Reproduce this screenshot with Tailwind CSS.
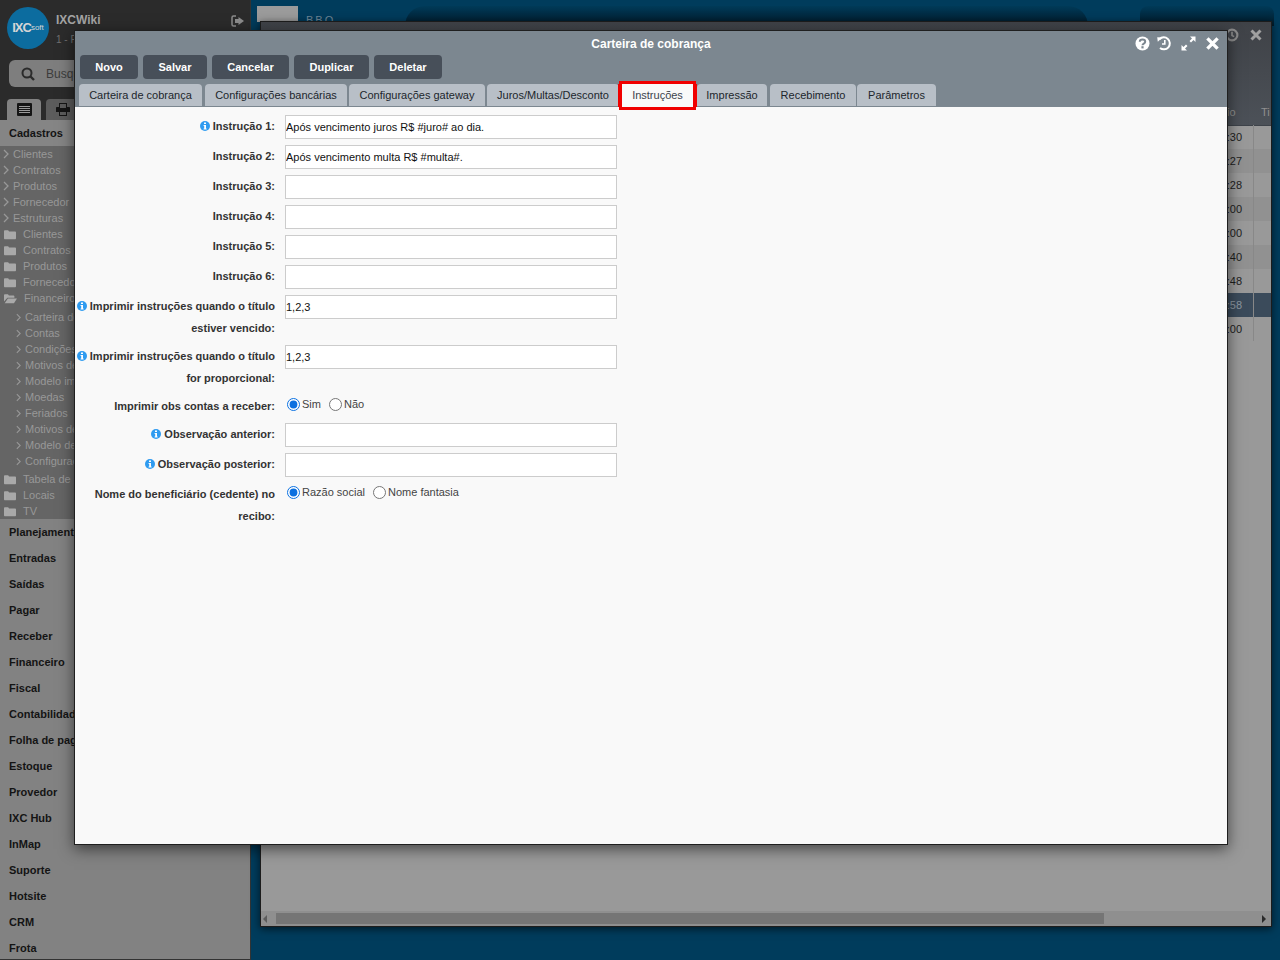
<!DOCTYPE html>
<html lang="pt-BR">
<head>
    <meta charset="UTF-8">
    <title>IXCWiki - Carteira de cobrança</title>
    <script src="https://cdn.jsdelivr.net/npm/@tailwindcss/browser@4"></script>
</head>
<body class="relative w-[1280px] h-[960px] overflow-hidden bg-[#003c5c] font-['Liberation_Sans',Arial,sans-serif] text-[11px]">
    <svg class="hidden">
        <symbol id="folder" viewBox="0 0 14 12"><path fill="#a9a9a9" d="M1.2 1h3.6l1.2 1.5h6.8c.6 0 1.2.5 1.2 1.2v6.6c0 .7-.6 1.2-1.2 1.2H1.2C.6 11.500 0 11 0 10.300V2.200C0 1.500.6 1 1.200 1z"/></symbol>
        <symbol id="folder-open" viewBox="0 0 15 12"><path fill="#a9a9a9" d="M0 2.200C0 1.500.6 1 1.200 1h3.300l1.200 1.500h5.100c.6 0 1.200.5 1.200 1.200V5H4L0 9.500zM4.500 6H15l-3.500 5.500H.8z"/></symbol>
        <symbol id="chev" viewBox="0 0 6 10"><path fill="none" stroke="currentColor" stroke-width="1.300" d="M1 1l4 4-4 4"/></symbol>
        <symbol id="info" viewBox="0 0 10 10"><circle cx="5" cy="5" r="5" fill="#2f9bf0"/><path fill="#fff" d="M4 1.500h2v1.500H4zM3.600 4h2.400v3.600h.6v1H3.600v-1h.6V5h-.6z"/></symbol>
    </svg>

    <!-- Sidebar (behind the overlay) -->
    <aside class="absolute left-0 top-0 w-[251px] h-[960px] flex flex-col overflow-hidden bg-[#828282] border-r border-b border-[#333]">
        <div class="h-[120px] shrink-0 bg-[#2b2b2b] relative">
            <div class="absolute left-[7px] top-[7px] w-[42px] h-[42px] rounded-full bg-[#0c6c9f] flex items-center justify-center text-[#d5d5d5] font-bold text-[13px] tracking-[-1px]">IXC<span class="font-normal text-[8px] tracking-normal">soft</span></div>
            <div class="absolute left-[56px] top-[11px] text-[12px] font-bold text-[#a3a3a3]">IXCWiki</div>
            <div class="absolute left-[56px] top-[32px] text-[10px] text-[#6f6f6f]">1 - Filial</div>
            <svg class="absolute left-[231px] top-[15px] w-[13px] h-[12px] text-[#8c8c8c]" viewBox="0 0 13 12"><path fill="none" stroke="currentColor" stroke-width="1.500" d="M5 1H2.500C1.500 1 1 1.500 1 2.500v7c0 1 .5 1.500 1.500 1.500H5"/><path fill="currentColor" d="M7.500 2l5.500 4-5.500 4V8H4V4h3.500z"/></svg>
            <div class="absolute left-[9px] top-[60px] w-[220px] h-[27px] rounded-md bg-[#7e7e7e] flex items-center pl-[12px] gap-[11px] text-[12px] text-[#3c3c3c]">
                <svg class="w-[14px] h-[14px] text-[#2b2b2b]" viewBox="0 0 14 14"><circle cx="6" cy="6" r="4.500" fill="none" stroke="currentColor" stroke-width="2"/><path stroke="currentColor" stroke-width="2.400" d="M9.500 9.500L13 13"/></svg>
                Busque
            </div>
            <div class="absolute left-[7px] top-[99px] w-[34px] h-[21px] rounded-t bg-[#828282] flex items-center justify-center">
                <svg class="w-[15px] h-[13px]" viewBox="0 0 15 13"><rect width="15" height="13" rx="1" fill="#151515"/><path stroke="#9a9a9a" d="M2 3.500h11M2 5.500h11M2 7.500h11M2 9.500h11"/></svg>
            </div>
            <div class="absolute left-[46px] top-[99px] w-[34px] h-[21px] rounded-t bg-[#5c5c5c] flex items-center justify-center">
                <svg class="w-[14px] h-[13px]" viewBox="0 0 14 13"><path fill="#151515" d="M3 0h8v4h2c.6 0 1 .4 1 1v4h-3v4H3V9H0V5c0-.6.4-1 1-1h2zm1 1v4h6V1zm0 8v3h6V9z"/></svg>
            </div>
        </div>
        <div class="h-[26px] shrink-0 pl-[9px] flex items-center font-bold text-[#141414] bg-[#858585]">Cadastros</div>

        <div class="shrink-0 h-[373px] bg-[#656565] text-[#989898] whitespace-nowrap">
            <div class="h-[16px] flex items-center pl-[3px] gap-[4px]"><svg class="w-[6px] h-[10px]"><use href="#chev"/></svg>Clientes</div>
            <div class="h-[16px] flex items-center pl-[3px] gap-[4px]"><svg class="w-[6px] h-[10px]"><use href="#chev"/></svg>Contratos</div>
            <div class="h-[16px] flex items-center pl-[3px] gap-[4px]"><svg class="w-[6px] h-[10px]"><use href="#chev"/></svg>Produtos</div>
            <div class="h-[16px] flex items-center pl-[3px] gap-[4px]"><svg class="w-[6px] h-[10px]"><use href="#chev"/></svg>Fornecedor</div>
            <div class="h-[16px] flex items-center pl-[3px] gap-[4px]"><svg class="w-[6px] h-[10px]"><use href="#chev"/></svg>Estruturas</div>
            <div class="h-[16px] flex items-center pl-[4px] gap-[7px]"><svg class="w-[12px] h-[11px]"><use href="#folder"/></svg>Clientes</div>
            <div class="h-[16px] flex items-center pl-[4px] gap-[7px]"><svg class="w-[12px] h-[11px]"><use href="#folder"/></svg>Contratos</div>
            <div class="h-[16px] flex items-center pl-[4px] gap-[7px]"><svg class="w-[12px] h-[11px]"><use href="#folder"/></svg>Produtos</div>
            <div class="h-[16px] flex items-center pl-[4px] gap-[7px]"><svg class="w-[12px] h-[11px]"><use href="#folder"/></svg>Fornecedores</div>
            <div class="h-[19px] pb-[3px] flex items-center pl-[4px] gap-[7px]"><svg class="w-[13px] h-[11px]"><use href="#folder-open"/></svg>Financeiro</div>
            <div class="h-[16px] flex items-center pl-[16px] gap-[4px]"><svg class="w-[5px] h-[9px]"><use href="#chev"/></svg>Carteira de cobrança</div>
            <div class="h-[16px] flex items-center pl-[16px] gap-[4px]"><svg class="w-[5px] h-[9px]"><use href="#chev"/></svg>Contas</div>
            <div class="h-[16px] flex items-center pl-[16px] gap-[4px]"><svg class="w-[5px] h-[9px]"><use href="#chev"/></svg>Condições de pagamento</div>
            <div class="h-[16px] flex items-center pl-[16px] gap-[4px]"><svg class="w-[5px] h-[9px]"><use href="#chev"/></svg>Motivos de desconto</div>
            <div class="h-[16px] flex items-center pl-[16px] gap-[4px]"><svg class="w-[5px] h-[9px]"><use href="#chev"/></svg>Modelo impressão</div>
            <div class="h-[16px] flex items-center pl-[16px] gap-[4px]"><svg class="w-[5px] h-[9px]"><use href="#chev"/></svg>Moedas</div>
            <div class="h-[16px] flex items-center pl-[16px] gap-[4px]"><svg class="w-[5px] h-[9px]"><use href="#chev"/></svg>Feriados</div>
            <div class="h-[16px] flex items-center pl-[16px] gap-[4px]"><svg class="w-[5px] h-[9px]"><use href="#chev"/></svg>Motivos de cancelamento</div>
            <div class="h-[16px] flex items-center pl-[16px] gap-[4px]"><svg class="w-[5px] h-[9px]"><use href="#chev"/></svg>Modelo de contrato</div>
            <div class="h-[18px] pb-[2px] flex items-center pl-[16px] gap-[4px]"><svg class="w-[5px] h-[9px]"><use href="#chev"/></svg>Configurações</div>
            <div class="h-[16px] flex items-center pl-[4px] gap-[7px]"><svg class="w-[12px] h-[11px]"><use href="#folder"/></svg>Tabela de preços</div>
            <div class="h-[16px] flex items-center pl-[4px] gap-[7px]"><svg class="w-[12px] h-[11px]"><use href="#folder"/></svg>Locais</div>
            <div class="h-[16px] flex items-center pl-[4px] gap-[7px]"><svg class="w-[12px] h-[11px]"><use href="#folder"/></svg>TV</div>
        </div>

        <nav class="flex flex-col font-bold text-[#141414]">
            <div class="h-[26px] pl-[9px] flex items-center">Planejamento</div>
            <div class="h-[26px] pl-[9px] flex items-center">Entradas</div>
            <div class="h-[26px] pl-[9px] flex items-center">Saídas</div>
            <div class="h-[26px] pl-[9px] flex items-center">Pagar</div>
            <div class="h-[26px] pl-[9px] flex items-center">Receber</div>
            <div class="h-[26px] pl-[9px] flex items-center">Financeiro</div>
            <div class="h-[26px] pl-[9px] flex items-center">Fiscal</div>
            <div class="h-[26px] pl-[9px] flex items-center">Contabilidade</div>
            <div class="h-[26px] pl-[9px] flex items-center">Folha de pagamento</div>
            <div class="h-[26px] pl-[9px] flex items-center">Estoque</div>
            <div class="h-[26px] pl-[9px] flex items-center">Provedor</div>
            <div class="h-[26px] pl-[9px] flex items-center">IXC Hub</div>
            <div class="h-[26px] pl-[9px] flex items-center">InMap</div>
            <div class="h-[26px] pl-[9px] flex items-center">Suporte</div>
            <div class="h-[26px] pl-[9px] flex items-center">Hotsite</div>
            <div class="h-[26px] pl-[9px] flex items-center">CRM</div>
            <div class="h-[26px] pl-[9px] flex items-center">Frota</div>
        </nav>
    </aside>

    <!-- Top bar shapes of the desktop -->
    <div class="absolute left-[257px] top-[6px] w-[41px] h-[16px] bg-[#9b9b9b]"></div>
    <div class="absolute left-[306px] top-[12px] text-[11px] tracking-[2px] text-[#6f8797]">BBQ —</div>
    <div class="absolute left-[405px] top-[6px] w-[683px] h-[20px] rounded-t-[20px] bg-linear-to-b from-[#003a58] to-[#001b2b]"></div>
    <div class="absolute left-[1140px] top-[6px] w-[134px] h-[20px] rounded-t-lg bg-linear-to-b from-[#003a58] to-[#001b2b]"></div>

    <!-- Window behind the dialog -->
    <section class="absolute left-[260px] top-[21px] w-[1012px] h-[906px] bg-[#999] border border-[#1c1c1c] shadow-[0_2px_8px_rgba(0,0,0,0.6)] flex flex-col">
        <header class="h-[103px] shrink-0 bg-linear-to-b from-[#3f4247] to-[#4c5158] relative text-[#8a8a8a]">
            <svg class="absolute left-[964px] top-[6px] w-[14px] h-[14px] text-[#8a8a8a]" viewBox="0 0 13 13"><circle cx="6.500" cy="6.500" r="5" fill="none" stroke="currentColor" stroke-width="2"/><path fill="none" stroke="currentColor" stroke-width="1.500" d="M6.500 3.500v3.500l2 1"/></svg>
            <svg class="absolute left-[989px] top-[7px] w-[12px] h-[12px] text-[#a0a0a0]" viewBox="0 0 12 12"><path stroke="currentColor" stroke-width="3" d="M1.500 1.500l9 9M10.500 1.500l-9 9"/></svg>
            <div class="absolute left-[966px] top-[82px] text-[#8f8f8f]">io</div>
            <div class="absolute left-[1000px] top-[82px] text-[#8f8f8f]">Ti</div>
        </header>
        <div class="flex-1 relative text-[#1d1d1d]">
            <div class="h-[24px] flex items-center justify-end pr-[29px] bg-[#999] border-t border-[#3e434a]">:30</div>
            <div class="h-[24px] flex items-center justify-end pr-[29px] bg-[#919191]">:27</div>
            <div class="h-[24px] flex items-center justify-end pr-[29px] bg-[#999]">:28</div>
            <div class="h-[24px] flex items-center justify-end pr-[29px] bg-[#919191]">:00</div>
            <div class="h-[24px] flex items-center justify-end pr-[29px] bg-[#999]">:00</div>
            <div class="h-[24px] flex items-center justify-end pr-[29px] bg-[#919191]">:40</div>
            <div class="h-[24px] flex items-center justify-end pr-[29px] bg-[#999]">:48</div>
            <div class="h-[24px] flex items-center justify-end pr-[29px] bg-[#3b4b5b] text-[#8d97a1]">:58</div>
            <div class="h-[24px] flex items-center justify-end pr-[29px] bg-[#999]">:00</div>
            <div class="absolute left-[992px] top-0 h-[216px] w-px bg-[#888]"></div>
            <!-- horizontal scrollbar -->
            <div class="absolute left-0 right-0 bottom-0 h-[15px] bg-[#8f8f8f] flex items-center">
                <span class="ml-[2px] w-0 h-0 border-y-[4px] border-y-transparent border-r-[4px] border-r-[#5c5c5c]"></span>
                <div class="ml-[9px] w-[828px] h-[11px] bg-[#757575]"></div>
                <span class="ml-auto mr-[5px] w-0 h-0 border-y-[4px] border-y-transparent border-l-[4px] border-l-[#2a2a2a]"></span>
            </div>
        </div>
    </section>

    <!-- Dialog: Carteira de cobrança -->
    <section class="absolute left-[74px] top-[30px] w-[1154px] h-[815px] border border-[#1f1f1f] bg-[#f9f9f9] shadow-[0_4px_14px_rgba(0,0,0,0.55)] flex flex-col">
        <header class="h-[76px] shrink-0 bg-[#7c8790] relative">
            <h1 class="h-[25px] flex items-center justify-center text-[12px] font-bold text-white">Carteira de cobrança</h1>
            <div class="absolute top-[5px] left-[1060px] flex items-center gap-[7px] text-white">
                <svg class="w-[15px] h-[15px]" viewBox="0 0 15 15"><circle cx="7.500" cy="7.500" r="7" fill="currentColor"/><path fill="none" stroke="#7c8790" stroke-width="2" d="M4.800 5.800c0-1.500 1.200-2.300 2.700-2.300s2.700.8 2.700 2.200c0 1.900-2.700 1.800-2.700 3.500"/><rect x="6.400" y="10.200" width="2.200" height="2.200" fill="#7c8790"/></svg>
                <svg class="w-[15px] h-[15px]" viewBox="0 0 15 15"><path fill="none" stroke="currentColor" stroke-width="2" d="M2.500 3.200A6 6 0 1 1 3 12"/><path fill="currentColor" d="M.2 1.200l5.200.4-4.600 4.200z"/><path fill="none" stroke="currentColor" stroke-width="1.600" d="M7.800 4v4H5"/></svg>
                <svg class="w-[15px] h-[15px] ml-[2px]" viewBox="0 0 15 15"><path fill="currentColor" d="M9 .5h5.500V6l-2-2L10 6.500 8.500 5 11 2.500zM6 14.500H.5V9l2 2L5 8.500 6.500 10 4 12.500z"/></svg>
                <svg class="w-[13px] h-[13px] ml-[3px]" viewBox="0 0 14 14"><path stroke="currentColor" stroke-width="3.600" d="M1.500 1.500l11 11M12.500 1.500l-11 11"/></svg>
            </div>
            <div class="absolute left-[5px] top-[24px] flex gap-[5px] font-bold text-white">
                <button class="h-[24px] w-[58px] rounded-sm bg-[#474f59]">Novo</button>
                <button class="h-[24px] w-[64px] rounded-sm bg-[#474f59]">Salvar</button>
                <button class="h-[24px] w-[77px] rounded-sm bg-[#474f59]">Cancelar</button>
                <button class="h-[24px] w-[75px] rounded-sm bg-[#474f59]">Duplicar</button>
                <button class="h-[24px] w-[68px] rounded-sm bg-[#474f59]">Deletar</button>
            </div>
            <nav class="absolute left-[4px] top-[53px] h-[23px] flex items-start text-[#20262c]">
                <a class="h-[22px] w-[123px] mr-[3px] rounded-t-sm bg-[#b8bfc7] flex items-center justify-center">Carteira de cobrança</a>
                <a class="h-[22px] w-[142px] mr-[2px] rounded-t-sm bg-[#b8bfc7] flex items-center justify-center">Configurações bancárias</a>
                <a class="h-[22px] w-[136px] mr-[2px] rounded-t-sm bg-[#b8bfc7] flex items-center justify-center">Configurações gateway</a>
                <a class="h-[22px] w-[132px] mr-[3px] rounded-t-sm bg-[#b8bfc7] flex items-center justify-center">Juros/Multas/Desconto</a>
                <a class="h-[23px] w-[71px] mr-[4px] bg-[#f9f9f9] text-[#3c444c] flex items-center justify-center shadow-[0_0_0_3px_#f00000,-4px_0_0_0_#f00000,4px_0_0_0_#f00000]">Instruções</a>
                <a class="h-[22px] w-[70px] mr-[3px] rounded-t-sm bg-[#b8bfc7] flex items-center justify-center">Impressão</a>
                <a class="h-[22px] w-[86px] mr-[1px] rounded-t-sm bg-[#b8bfc7] flex items-center justify-center">Recebimento</a>
                <a class="h-[22px] w-[79px] rounded-t-sm bg-[#b8bfc7] flex items-center justify-center">Parâmetros</a>
            </nav>
        </header>

        <form class="pt-[8px] flex flex-col gap-[6px] text-[#111]">
            <div class="flex items-start">
                <label class="w-[200px] text-right font-bold leading-[22px] text-[#333]"><svg class="inline w-[10px] h-[10px] mr-[3px] align-[-1px]"><use href="#info"/></svg>Instrução 1:</label>
                <input class="ml-[10px] w-[332px] h-[24px] px-0 bg-white border border-[#ccc] outline-none" value="Após vencimento juros R$ #juro# ao dia.">
            </div>
            <div class="flex items-start">
                <label class="w-[200px] text-right font-bold leading-[22px] text-[#333]">Instrução 2:</label>
                <input class="ml-[10px] w-[332px] h-[24px] px-0 bg-white border border-[#ccc] outline-none" value="Após vencimento multa R$ #multa#.">
            </div>
            <div class="flex items-start">
                <label class="w-[200px] text-right font-bold leading-[22px] text-[#333]">Instrução 3:</label>
                <input class="ml-[10px] w-[332px] h-[24px] px-0 bg-white border border-[#ccc] outline-none">
            </div>
            <div class="flex items-start">
                <label class="w-[200px] text-right font-bold leading-[22px] text-[#333]">Instrução 4:</label>
                <input class="ml-[10px] w-[332px] h-[24px] px-0 bg-white border border-[#ccc] outline-none">
            </div>
            <div class="flex items-start">
                <label class="w-[200px] text-right font-bold leading-[22px] text-[#333]">Instrução 5:</label>
                <input class="ml-[10px] w-[332px] h-[24px] px-0 bg-white border border-[#ccc] outline-none">
            </div>
            <div class="flex items-start">
                <label class="w-[200px] text-right font-bold leading-[22px] text-[#333]">Instrução 6:</label>
                <input class="ml-[10px] w-[332px] h-[24px] px-0 bg-white border border-[#ccc] outline-none">
            </div>
            <div class="flex items-start">
                <label class="w-[200px] text-right font-bold leading-[22px] text-[#333]"><svg class="inline w-[10px] h-[10px] mr-[3px] align-[-1px]"><use href="#info"/></svg>Imprimir instruções quando o título estiver vencido:</label>
                <input class="ml-[10px] w-[332px] h-[24px] px-0 bg-white border border-[#ccc] outline-none" value="1,2,3">
            </div>
            <div class="flex items-start">
                <label class="w-[200px] text-right font-bold leading-[22px] text-[#333]"><svg class="inline w-[10px] h-[10px] mr-[3px] align-[-1px]"><use href="#info"/></svg>Imprimir instruções quando o título for proporcional:</label>
                <input class="ml-[10px] w-[332px] h-[24px] px-0 bg-white border border-[#ccc] outline-none" value="1,2,3">
            </div>
            <div class="flex items-start">
                <label class="w-[200px] text-right font-bold leading-[22px] text-[#333]">Imprimir obs contas a receber:</label>
                <div class="ml-[12px] h-[18px] flex items-center text-[#444]">
                    <input type="radio" name="obs" checked class="w-[13px] h-[13px] m-0 accent-[#0b70e0]"><span class="ml-[2px]">Sim</span>
                    <input type="radio" name="obs" class="w-[13px] h-[13px] ml-[8px]"><span class="ml-[2px]">Não</span>
                </div>
            </div>
            <div class="flex items-start">
                <label class="w-[200px] text-right font-bold leading-[22px] text-[#333]"><svg class="inline w-[10px] h-[10px] mr-[3px] align-[-1px]"><use href="#info"/></svg>Observação anterior:</label>
                <input class="ml-[10px] w-[332px] h-[24px] px-0 bg-white border border-[#ccc] outline-none">
            </div>
            <div class="flex items-start">
                <label class="w-[200px] text-right font-bold leading-[22px] text-[#333]"><svg class="inline w-[10px] h-[10px] mr-[3px] align-[-1px]"><use href="#info"/></svg>Observação posterior:</label>
                <input class="ml-[10px] w-[332px] h-[24px] px-0 bg-white border border-[#ccc] outline-none">
            </div>
            <div class="flex items-start">
                <label class="w-[200px] text-right font-bold leading-[22px] text-[#333]">Nome do beneficiário (cedente) no recibo:</label>
                <div class="ml-[12px] h-[18px] flex items-center text-[#444]">
                    <input type="radio" name="nome" checked class="w-[13px] h-[13px] m-0 accent-[#0b70e0]"><span class="ml-[2px]">Razão social</span>
                    <input type="radio" name="nome" class="w-[13px] h-[13px] ml-[8px]"><span class="ml-[2px]">Nome fantasia</span>
                </div>
            </div>
        </form>
    </section>
</body>
</html>
